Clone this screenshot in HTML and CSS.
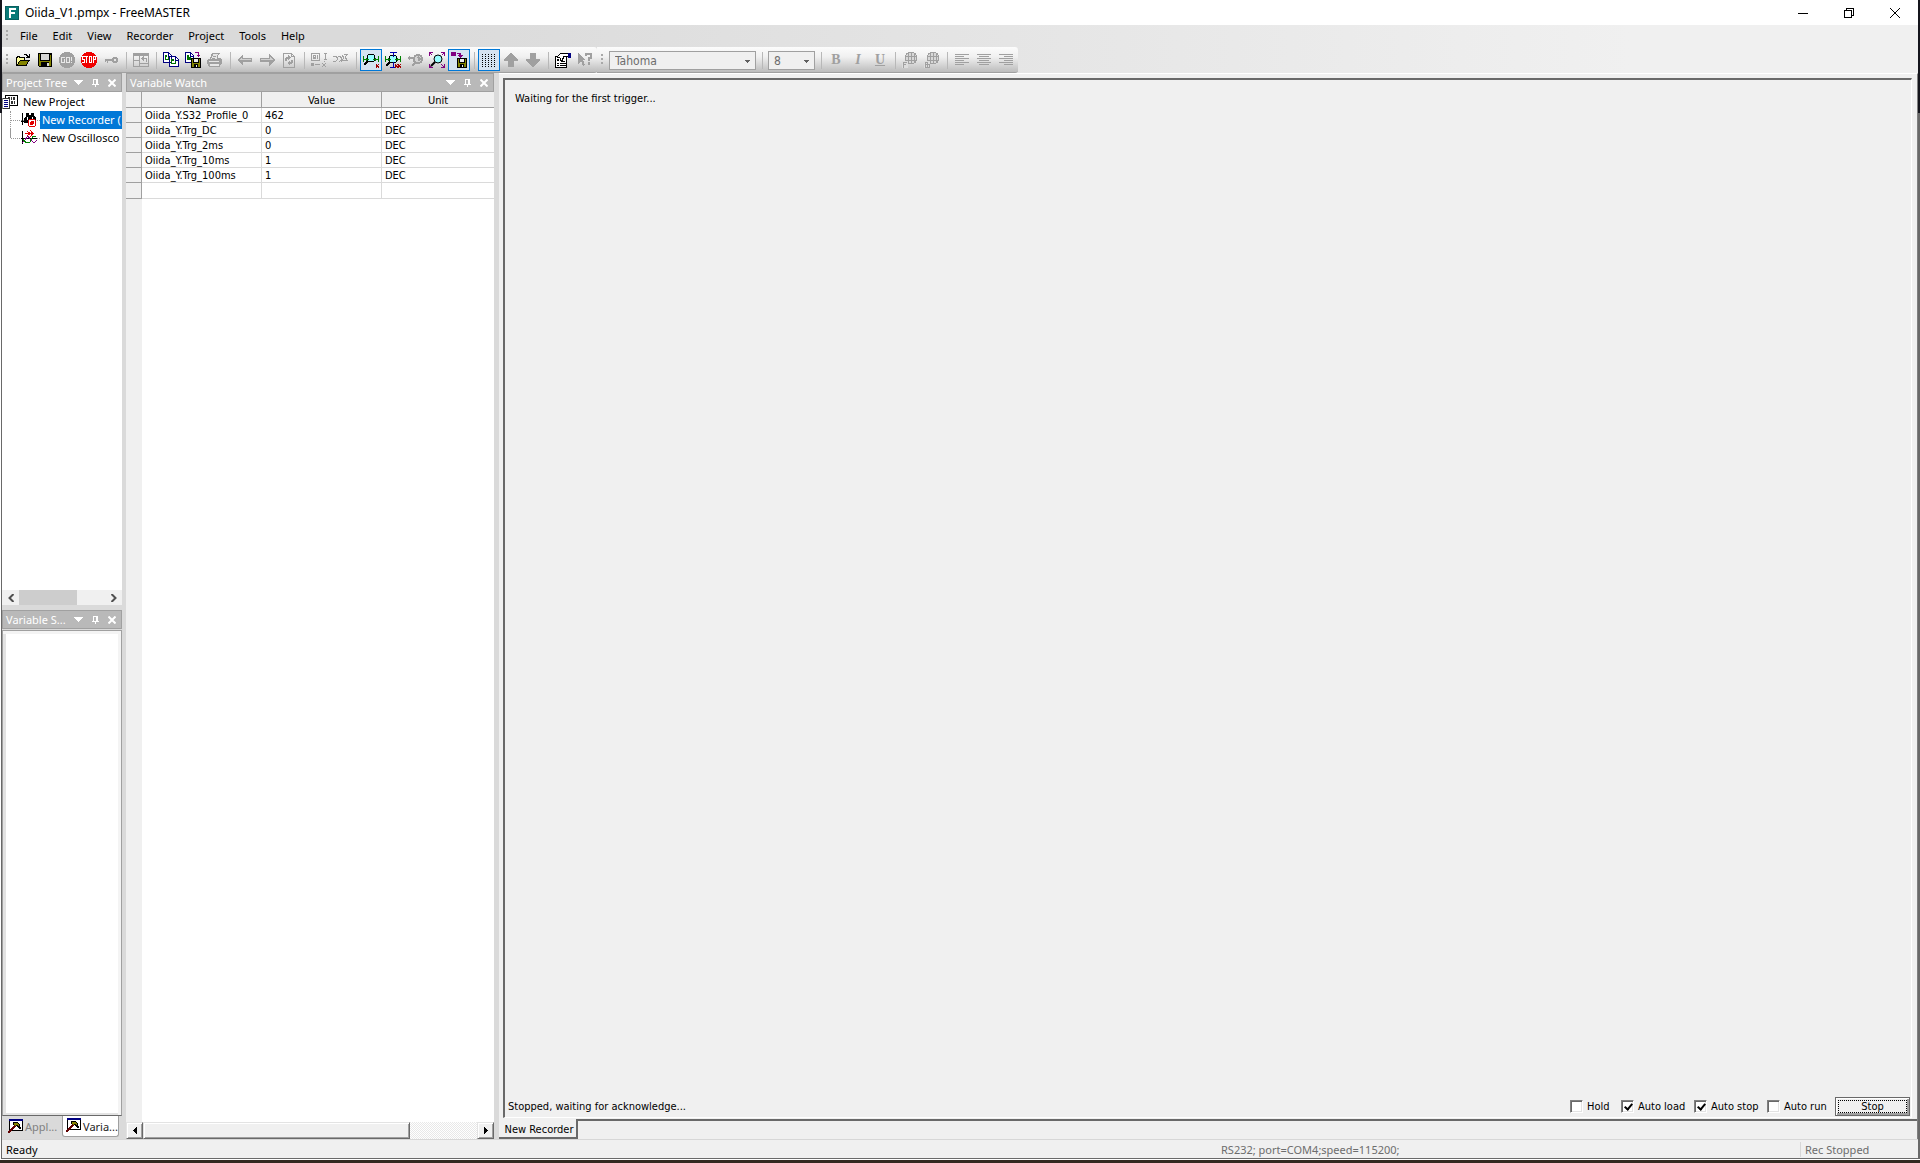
FILE: index.html
```html
<!DOCTYPE html>
<html lang="en">
<head>
  <meta charset="UTF-8" />
  <title>Oiida_V1.pmpx - FreeMASTER</title>
  <link rel="stylesheet" href="styles.css">
</head>
<body>
  <div class="desktop">
  <div class="window">
    <header class="titlebar">
      <svg class="logo" width="14" height="14" viewBox="0 0 14 14"><rect width="14" height="14" fill="#0a5f5f"/><rect x="1" y="1" width="12" height="12" fill="#0a7a78"/><path d="M4 2h7v2H6v2h4v2H6v4H4z" fill="#fff"/></svg>
      <h1>Oiida_V1.pmpx - FreeMASTER</h1>
      <div class="winbtns">
        <button aria-label="Minimize"><svg width="10" height="10"><path d="M0 5.500h10" stroke="#000"/></svg></button>
        <button aria-label="Restore"><svg width="10" height="10" fill="none" stroke="#000"><path d="M.5 2.500h7v7h-7zM2.500 2.500v-2h7v7h-2"/></svg></button>
        <button aria-label="Close"><svg class="smooth" width="10" height="10" stroke="#000"><path d="M0 0l10 10M10 0L0 10"/></svg></button>
      </div>
    </header>

    <nav class="menubar">
      <i class="grip"></i>
      <button>File</button>
      <button>Edit</button>
      <button>View</button>
      <button>Recorder</button>
      <button>Project</button>
      <button>Tools</button>
      <button>Help</button>
    </nav>

    <div class="toolrow">
      <div class="toolbar">
        <i class="grip"></i>
        <button aria-label="Open"><svg viewBox="0 0 16 16"><path d="M1 14V5h1V4h3v1h5v3h5v1h-1v1h-1v2h-1v2z" fill="#000"/><path d="M2 12V6h1V5h1v1h5v2H5v1H4v1H3v2z" fill="#ffff9c"/><path d="M3 13v-1h1v-2h1V9h8v1h-1v2h-1v1z" fill="#848400"/><path d="M9 2h3v1h1v1h1V2h1v4h-4V5h1V4h-1V3H9z" fill="#000"/></svg></button>
        <button aria-label="Save"><svg viewBox="0 0 16 16"><path d="M1 1h14v14H2l-1-1z" fill="#000"/><path d="M2 2h1v7h10V2h1v12H2z" fill="#848400"/><path d="M4 2h8v6H4zM10 11h2v3h-2z" fill="#d8d8d8"/><path d="M4 10h8v1H4zM4 11h6v3H4zM13 2h1v1h-1z" fill="#000"/></svg></button>
        <button aria-label="Go"><svg viewBox="0 0 16 16"><path d="M5 0h6v1h2v1h1v1h1v2h1v6h-1v2h-1v1h-1v1h-2v1H5v-1H3v-1H2v-1H1v-2H0V5h1V3h1V2h1V1h2z" fill="#a0a0a0"/><path d="M5.500 5.500h-3v5h3v-3h-1M7.500 5.500h3v5h-3zM12.500 5v4M12.500 10v1" stroke="#e8e8e8" fill="none"/></svg></button>
        <button aria-label="Stop communication"><svg viewBox="0 0 16 16"><path d="M5 0h6v1h2v1h1v1h1v2h1v6h-1v2h-1v1h-1v1h-2v1H5v-1H3v-1H2v-1H1v-2H0V5h1V3h1V2h1V1h2z" fill="#f00000"/><path d="M4 4.500H1.500v3h2v3H1M4 4.500h3M5.500 4v7M8.500 4.500h2v6h-2zM12.500 11V4.500h2v3h-2" stroke="#fff" fill="none"/></svg></button>
        <button aria-label="Connect"><svg viewBox="0 0 16 16"><path d="M10 5h4v1h1v4h-1v1h-4v-1H9V9H5v2H4V9H3v1H2V7h7V6h1zM11 7v2h2V7z" fill="#a0a0a0" fill-rule="evenodd"/></svg></button>
        <i class="sep"></i>
        <button aria-label="Wizard"><svg viewBox="0 0 16 16"><path d="M0 1h16v14H0zM1 4v4h5V4zM7 4v7h8V4zM1 9v5h5V9zM7 12v2h8v-2z" fill="#a0a0a0" fill-rule="evenodd"/><path d="M9 6.500h4v3M11 4.500L9 6.500l2 2" stroke="#a0a0a0" fill="none"/></svg></button>
        <i class="sep"></i>
        <button aria-label="Copy"><svg viewBox="0 0 16 16"><path d="M.5.5h5l3 3v7h-8zM6.500 4.500h6l3 3v7h-9z" fill="#fff" stroke="#000080"/><path d="M5.500 1v3H8M12.500 5v3H15" stroke="#000080" fill="none"/><path d="M2 3h2v2h2v3H2zM8 7h3v2h2v3H8z" fill="#007000"/><path d="M3 5h2v2H3zM9 9h3v2H9z" fill="#fff"/></svg></button>
        <button aria-label="Copy to file"><svg viewBox="0 0 16 16"><path d="M.5.5h5l3 3v7h-8z" fill="#fff" stroke="#000080"/><path d="M5.500 1v3H8" stroke="#000080" fill="none"/><path d="M2 3h2v2h2v3H2z" fill="#007000"/><path d="M10 0h4v3h2l-2.500 2L11 3h2V1h-3z" fill="#800080"/><path d="M6 6h10v10H6z" fill="#000"/><path d="M7 7h1v4h6V7h1v8H7z" fill="#848400"/><path d="M9 7h4v3H9z" fill="#eee"/><path d="M9 12h4v3H9z"/><path d="M11 13h1v2h-1z" fill="#eee"/></svg></button>
        <button aria-label="Print"><svg viewBox="0 0 16 16"><path d="M5 1h8v1h-1v1h-1v3h3v1h1v5h-1v1h-1v2H2v-1H1v-2H0V8h1V7h2V5h1V2h1z" fill="#a0a0a0"/><path d="M6 2h5v1h-1v4H4V6h1V4h1zM2 9h10v1H2zM3 12h9v2H3z" fill="#e6e6e6"/><path d="M6 4h3M5 6h3" stroke="#a0a0a0"/></svg></button>
        <i class="sep"></i>
        <button aria-label="Back"><svg viewBox="0 0 16 16"><path d="M0 8l6-6v4h9v4H6v4z" fill="#a0a0a0"/><path d="M2 8l3-3v2h9v1z" fill="#d0d0d0"/></svg></button>
        <button aria-label="Forward"><svg viewBox="0 0 16 16"><path d="M16 8l-6-6v4H1v4h9v4z" fill="#a0a0a0"/><path d="M14 8l-3-3v2H2v1z" fill="#d0d0d0"/></svg></button>
        <button aria-label="Reload"><svg viewBox="0 0 16 16"><path d="M2.500 1.500h8l3 3v11h-11zM10.500 1v3.500h3" fill="none" stroke="#a0a0a0"/><path d="M4 9V6h1V5h2V3l3 3-3 2V7H6v2zM12 8v3h-1v1H9v2l-3-3 3-2v1h1V8z" fill="#a0a0a0"/></svg></button>
        <i class="sep"></i>
        <button aria-label="Oscilloscope setup"><svg viewBox="0 0 16 16"><path d="M.5 1.500h8v7h-8zM6 12l3 .5M11 11l4 4M15 11l-4 4" fill="none" stroke="#a0a0a0"/><path d="M2 3h2v1H2zM2 4h1v1H2zM2 5h2v2H2zM4 3h1v4H4zM6 3h1v4H6zM0 11h3v3H0zM4 12h2v1H4zM13 1h3v1h-1v5h1v1h-3V7h1V2h-1zM13 9h1v1h-1z" fill="#a0a0a0"/></svg></button>
        <button aria-label="Next variable"><svg viewBox="0 0 16 16"><path d="M0 4h3l2 3-2 2H0M5 4h2l2 3-3 3M9 3l2 3-3 4M11 2h4l-3 3 2 3h-4" fill="none" stroke="#a0a0a0"/></svg></button>
        <i class="sep"></i>
        <button class="on" aria-label="Zoom X"><svg viewBox="0 0 16 16"><circle cx="8" cy="6" r="4" fill="#9ff" stroke="#000"/><path d="M5 9l-4 4" stroke="#000" stroke-width="2"/><path d="M.5 4v6M15.500 4v6M1 7.500h5M10 7.500h5M3.500 6v3M12.500 6v3" stroke="#008000" fill="none"/><path d="M13 12l3 4M16 12l-3 4" stroke="#a00000"/></svg></button>
        <button aria-label="Zoom X Y"><svg viewBox="0 0 16 16"><circle cx="8" cy="7" r="4" fill="#9ff" stroke="#000"/><path d="M5 10l-4 4" stroke="#000" stroke-width="2"/><path d="M.5 4v6M15.500 4v6M1 7.500h5M10 7.500h5M3.500 6v3M12.500 6v3" stroke="#008000" fill="none"/><path d="M5 .5h7M8.500 1v4M8.500 10v5M5 15.500h5" stroke="#0000b0"/><path d="M10 12l3 4M13 12l-3 4M13 12l3 4M16 12l-3 4" stroke="#a00000"/></svg></button>
        <button aria-label="Undo zoom"><svg viewBox="0 0 16 16"><path d="M3 3L0 6l3 3V7h3v3h2V5H3z" fill="#a0a0a0"/><circle cx="11" cy="7" r="4" fill="#d4d4d4" stroke="#a0a0a0" stroke-width="2"/><path d="M11 5l2 2-2 2M9 10l-4 4" fill="none" stroke="#a0a0a0" stroke-width="2"/></svg></button>
        <button aria-label="Zoom all"><svg class="smooth" viewBox="0 0 16 16"><path d="M.5 4V.5H4M12 .5h3.500V4M15.500 12v3.500H12M4 15.500H.5V12M0 0l3 3M16 0l-3 3M16 16l-4-4M0 16l3-3" stroke="#800080" fill="none"/><circle cx="9" cy="7" r="4" fill="#9ff" stroke="#000"/><path d="M6 10l-4 4" stroke="#000" stroke-width="2"/></svg></button>
        <button class="on" aria-label="Auto save"><svg viewBox="0 0 16 16"><path d="M0 0h5v4H0zM6 1h4v2h2l-3 3-3-3h2V2H6z" fill="#800080"/><path d="M6 6h10v10H6z" fill="#000"/><path d="M7 7h1v4h6V7h1v8H7z" fill="#848400"/><path d="M9 7h4v3H9z" fill="#eee"/><path d="M9 12h4v3H9z"/><path d="M11 13h1v2h-1z" fill="#eee"/></svg></button>
        <i class="sep"></i>
        <button class="on" aria-label="Show grid"><svg viewBox="0 0 16 16"><path d="M1.500 2v13M4.500 2v13M7.500 2v13M10.500 2v13M13.500 2v13" stroke="#000" stroke-dasharray="1 1"/></svg></button>
        <button aria-label="Up"><svg viewBox="0 0 16 16"><path d="M8 1l7 6v2h-4v6H5V9H1V7z" fill="#a0a0a0"/></svg></button>
        <button aria-label="Down"><svg viewBox="0 0 16 16"><path d="M8 15l7-6V7h-4V1H5v6H1v2z" fill="#a0a0a0"/></svg></button>
        <i class="sep"></i>
        <button aria-label="Properties"><svg viewBox="0 0 16 16"><path d="M.5 4.500h11v11H.5z" fill="#fff" stroke="#000"/><path d="M2 7h2v2H2zM2 11h2v1H2zM2 13h2v1H2zM6 9h4v1H6zM5 11h6v1H5zM5 13h6v1H5z" fill="#000"/><path d="M2 5l4-4h7v3H8v2H7v2H5V6z" fill="#fff" stroke="#000"/><path d="M13 1h3v5h-3z" fill="#000080"/></svg></button>
        <button aria-label="Help pointer"><svg viewBox="0 0 16 16"><path d="M1 1l8 7H6l2 5-2 1-2-5-3 3z" fill="#a0a0a0"/><path d="M9 4V2h5v4h-2v3M12 10v3" stroke="#a0a0a0" stroke-width="2" fill="none"/></svg></button>
      </div>
      <div class="toolbar">
        <i class="grip"></i>
        <select class="font" aria-label="Font" disabled><option>Tahoma</option></select>
        <i class="sep"></i>
        <select class="size" aria-label="Font size" disabled><option>8</option></select>
        <i class="sep"></i>
        <button class="letter" aria-label="Bold"><b>B</b></button>
        <button class="letter" aria-label="Italic"><b><em>I</em></b></button>
        <button class="letter" aria-label="Underline"><b><u>U</u></b></button>
        <i class="sep"></i>
        <button aria-label="Text color"><svg viewBox="0 0 16 16"><circle cx="9" cy="6" r="6" fill="#d8d8d8" stroke="#a0a0a0"/><path d="M9 0v12M3 4h12M3 8h12M6 1v10M12 1v10" stroke="#a0a0a0"/><path d="M0 9h6v7H0z" fill="#ddd"/><path d="M1.500 16V10.500H5M1 12.500h3" stroke="#a0a0a0" fill="none"/></svg></button>
        <button aria-label="Back color"><svg viewBox="0 0 16 16"><circle cx="9" cy="6" r="6" fill="#d8d8d8" stroke="#a0a0a0"/><path d="M9 0v12M3 4h12M3 8h12M6 1v10M12 1v10" stroke="#a0a0a0"/><path d="M0 9h6v7H0z" fill="#ddd"/><path d="M1.500 10.500h2v5h-2zM1 12.500h4v3H1" stroke="#a0a0a0" fill="none"/></svg></button>
        <i class="sep"></i>
        <button aria-label="Align left"><svg viewBox="0 0 16 16"><path d="M1 2.500h14M1 4.500h9M1 6.500h14M1 8.500h9M1 10.500h14M1 12.500h9" stroke="#a0a0a0"/></svg></button>
        <button aria-label="Center"><svg viewBox="0 0 16 16"><path d="M1 2.500h14M3 4.500h10M1 6.500h14M3 8.500h10M1 10.500h14M3 12.500h10" stroke="#a0a0a0"/></svg></button>
        <button aria-label="Align right"><svg viewBox="0 0 16 16"><path d="M1 2.500h14M6 4.500h9M1 6.500h14M6 8.500h9M1 10.500h14M6 12.500h9" stroke="#a0a0a0"/></svg></button>
      </div>
    </div>

    <div class="workspace">
      <aside class="left">
        <div class="dockhead"><h2>Project Tree</h2>
          <button aria-label="Menu"><svg width="9" height="5"><path d="M0 0h9L4.500 5z" fill="#fff"/></svg></button>
          <button aria-label="Pin"><svg width="7" height="8"><path d="M1.500 5V.5h4V5M4.500 0v5M0 5.500h7M3.500 5v3" stroke="#fff" fill="none"/></svg></button>
          <button aria-label="Close"><svg class="smooth" width="8" height="8"><path d="M.5.5l7 7M7.500.5l-7 7" stroke="#fff" stroke-width="2"/></svg></button>
        </div>
        <ul class="tree">
          <li class="root"><svg width="16" height="16" viewBox="0 0 16 16"><path d="M3.500 1.500h12v10h-12z" fill="#fff" stroke="#000"/><path d="M6 3h2v3H6zM9 3h1v3H9zM11 3h2v3h-2zM9 7h2v3H9zM12 7h1v3h-1z" fill="#333"/><path d="M.5 4.500h7v10h-7z" fill="#fff" stroke="#333"/><path d="M2 6.500h4M2 8.500h4M2 10.500h4M2 12.500h4" stroke="#000080"/><path d="M0 4h1v11H0z" fill="#808080"/></svg><span>New Project</span></li>
          <li class="child sel"><svg width="16" height="16" viewBox="0 0 16 16"><path d="M1.500 1v12M0 9.500h6" stroke="#000"/><path d="M5 4V1h3v2h2V1h3v3l2 2v6H8V9H7v2H3V7z" fill="#000"/><path d="M6.500 5v3M11.500 5v2" stroke="#fff"/><circle cx="11" cy="11" r="4" fill="#fff" stroke="#e00000"/><circle cx="11" cy="11" r="2" fill="#e00000"/></svg><span>New Recorder (</span></li>
          <li class="child last"><svg width="16" height="16" viewBox="0 0 16 16"><path d="M1.500 1v13M0 8.500h16" stroke="#000"/><path d="M1 13l3-3 3-4 3 4 3 3 3-3" stroke="#800080" fill="none"/><path d="M2 9l3 4 4-1 3-6 3 1" stroke="#008000" fill="none"/><path d="M4 3.500h8M9 0l3 3.500L9 7M6 1l3 2.500L6 6" stroke="#e00000" fill="none"/></svg><span>New Oscillosco</span></li>
        </ul>
        <div class="hscroll">
          <button aria-label="Scroll left"><svg class="smooth" width="6" height="8"><path d="M5.500 0L1.500 4l4 4" stroke="#505050" stroke-width="2" fill="none"/></svg></button>
          <div class="track"><div class="thumb"></div></div>
          <button aria-label="Scroll right"><svg class="smooth" width="6" height="8"><path d="M.5 0l4 4-4 4" stroke="#505050" stroke-width="2" fill="none"/></svg></button>
        </div>
        <div class="dockhead second"><h2>Variable S...</h2>
          <button aria-label="Menu"><svg width="9" height="5"><path d="M0 0h9L4.500 5z" fill="#fff"/></svg></button>
          <button aria-label="Pin"><svg width="7" height="8"><path d="M1.500 5V.5h4V5M4.500 0v5M0 5.500h7M3.500 5v3" stroke="#fff" fill="none"/></svg></button>
          <button aria-label="Close"><svg class="smooth" width="8" height="8"><path d="M.5.5l7 7M7.500.5l-7 7" stroke="#fff" stroke-width="2"/></svg></button>
        </div>
        <div class="stimulus"></div>
        <div class="docktabs">
          <button><svg width="16" height="16" viewBox="0 0 16 16"><path d="M1.500.5h13v11h-13z" fill="#fff" stroke="#000"/><path d="M1 0h14v2H1z" fill="#000080"/><path d="M5 3h4l3 3 1 4h-2L9 7 7 8 5 6z" fill="#000"/><path d="M6 4h3l2 2 1 3-3-3-2 1z" fill="#848400"/><path d="M7 7l-7 7" stroke="#600000" stroke-width="2"/></svg>Appl...</button>
          <button class="active"><svg width="16" height="16" viewBox="0 0 16 16"><path d="M1.500.5h13v11h-13z" fill="#fff" stroke="#000"/><path d="M1 0h14v2H1z" fill="#000080"/><path d="M5 3h4l3 3 1 4h-2L9 7 7 8 5 6z" fill="#000"/><path d="M6 4h3l2 2 1 3-3-3-2 1z" fill="#848400"/><path d="M7 7l-7 7" stroke="#600000" stroke-width="2"/></svg>Varia...</button>
        </div>
      </aside>

      <section class="watch">
        <div class="dockhead"><h2>Variable Watch</h2>
          <button aria-label="Menu"><svg width="9" height="5"><path d="M0 0h9L4.500 5z" fill="#fff"/></svg></button>
          <button aria-label="Pin"><svg width="7" height="8"><path d="M1.500 5V.5h4V5M4.500 0v5M0 5.500h7M3.500 5v3" stroke="#fff" fill="none"/></svg></button>
          <button aria-label="Close"><svg class="smooth" width="8" height="8"><path d="M.5.5l7 7M7.500.5l-7 7" stroke="#fff" stroke-width="2"/></svg></button>
        </div>
        <div class="grid">
          <table>
            <colgroup><col class="c-head"><col class="c-name"><col class="c-name"><col></colgroup>
            <thead><tr><th></th><th>Name</th><th>Value</th><th>Unit</th></tr></thead>
            <tbody>
              <tr><th></th><td>Oiida_Y.S32_Profile_0</td><td>462</td><td>DEC</td></tr>
              <tr><th></th><td>Oiida_Y.Trg_DC</td><td>0</td><td>DEC</td></tr>
              <tr><th></th><td>Oiida_Y.Trg_2ms</td><td>0</td><td>DEC</td></tr>
              <tr><th></th><td>Oiida_Y.Trg_10ms</td><td>1</td><td>DEC</td></tr>
              <tr><th></th><td>Oiida_Y.Trg_100ms</td><td>1</td><td>DEC</td></tr>
              <tr class="blank"><th></th><td></td><td></td><td></td></tr>
            </tbody>
          </table>
        </div>
        <div class="classic-scroll">
          <button aria-label="Scroll left"><svg width="4" height="7"><path d="M4 0v7L0 3.500z"/></svg></button>
          <div class="thumb"></div>
          <div class="track"></div>
          <button aria-label="Scroll right"><svg width="4" height="7"><path d="M0 0v7l4-3.500z"/></svg></button>
        </div>
      </section>

      <main class="detail">
        <div class="view">
          <p class="message">Waiting for the first trigger...</p>
          <div class="controls">
            <p>Stopped, waiting for acknowledge...</p>
            <label class="hold"><input type="checkbox">Hold</label>
            <label class="auto"><input type="checkbox" checked>Auto load</label>
            <label class="auto"><input type="checkbox" checked>Auto stop</label>
            <label class="run"><input type="checkbox">Auto run</label>
            <button class="push"><span>Stop</span></button>
          </div>
        </div>
        <div class="pagetabs"><button>New Recorder</button><i></i></div>
      </main>
    </div>

    <footer class="status">
      <span class="ready">Ready</span>
      <span class="port">RS232; port=COM4;speed=115200;</span>
      <span class="rec">Rec Stopped</span>
    </footer>
  </div>
  </div>
</body>
</html>
```
FILE: styles.css
```css
* {
  box-sizing: border-box;
}
body {
  margin: 0;
  font-family: "Noto Sans", "Open Sans", sans-serif;
  font-size: 11px;
  color: #000;
}
button {
  border: 0;
  padding: 0;
  background: none;
  font: inherit;
  color: inherit;
}
h1, h2, p, ul {
  margin: 0;
  padding: 0;
  font-weight: normal;
}
svg {
  display: block;
  flex: none;
  shape-rendering: crispEdges;
}
svg.smooth {
  shape-rendering: auto;
}

/* strips of desktop left visible around the window */
.desktop {
  height: 100vh;
  padding: 0 2px 4px;
  background:
    linear-gradient(#15151c, #15151c) 0 0 / 100% 113px no-repeat,
    linear-gradient(#33271f, #33271f) 0 100% / 100% 3px no-repeat,
    linear-gradient(#fff, #fff) 0 0 / 1px 100% no-repeat,
    linear-gradient(#fff, #fff) 0 calc(100% - 3px) / 100% 1px no-repeat,
    #696969;
}
.window {
  height: 100%;
  display: flex;
  flex-direction: column;
  background: #f0f0f0;
}

.titlebar {
  display: flex;
  align-items: center;
  height: 25px;
  padding-left: 3px;
  background: #fff;
}
.titlebar h1 {
  flex: 1;
  margin-left: 6px;
  font-size: 12px;
}
.winbtns {
  display: flex;
}
.winbtns button {
  width: 46px;
  height: 22px;
  display: flex;
  align-items: center;
  justify-content: center;
}

.menubar {
  display: flex;
  align-items: center;
  height: 22px;
  padding: 0 4px 1px;
  background: linear-gradient(90deg, #dadada, #dadada 20%, #f0f0f0 85%);
}
.menubar button {
  padding: 0 7px 0 8px;
}
.grip {
  width: 2px;
  height: 12px;
  margin: 0 4px 0 0;
  background: repeating-linear-gradient(#a8a8a8 0 2px, transparent 2px 4px);
}

.toolrow {
  display: flex;
  height: 26px;
  background: linear-gradient(90deg, #dadada, #dadada 20%, #f0f0f0 85%);
}
.toolbar {
  display: flex;
  align-items: center;
  height: 26px;
  padding: 1px 1px 0 4px;
  border-bottom: 1px solid #a0a0a0;
  border-radius: 0 3px 3px 0;
  background: linear-gradient(#fcfcfc, #f0f0f0 40%, #bcbcbc);
}
.toolbar button {
  width: 22px;
  height: 22px;
  display: flex;
  align-items: center;
  justify-content: center;
}
.toolbar svg {
  width: 16px;
  height: 16px;
}
.toolbar button.on {
  border: 1px solid #0078d7;
  background: #d5e3f0;
}
.sep {
  width: 1px;
  height: 17px;
  margin: 0 3px 0 4px;
  background: #b8b8b8;
}
.toolbar .letter {
  font-family: "Liberation Serif", serif;
  font-size: 14px;
  color: #a0a0a0;
}
.toolbar select {
  appearance: none;
  height: 19px;
  margin: 1px 2px 0;
  padding: 0 5px;
  border: 1px solid #a0a0a0;
  border-radius: 0;
  font: 12px/18px "DejaVu Sans Condensed", sans-serif;
  color: #6d6d6d;
  opacity: 1;
  background: linear-gradient(#606060, #606060) right 5px top 8px / 5px 1px no-repeat,
    linear-gradient(#606060, #606060) right 6px top 9px / 3px 1px no-repeat,
    linear-gradient(#606060, #606060) right 7px top 10px / 1px 1px no-repeat, #f0f0f0;
}
.toolbar .font {
  width: 147px;
}
.toolbar .size {
  width: 47px;
}

.workspace {
  flex: 1;
  min-height: 0;
  display: flex;
  background: #dadada;
}
.dockhead {
  display: flex;
  align-items: center;
  gap: 9px;
  height: 19px;
  padding: 0 5px 0 3px;
  border: 1px solid #a0a0a0;
  background: #b9b9b9;
  color: #fff;
}
.dockhead h2 {
  flex: 1;
  min-width: 0;
  font-size: 11px;
  white-space: nowrap;
}

.left {
  width: 120px;
  margin-right: 4px;
  display: flex;
  flex-direction: column;
}
.tree {
  height: 498px;
  padding-top: 1px;
  background: #fff;
  overflow: hidden;
  list-style: none;
}
.tree li {
  display: flex;
  align-items: center;
  height: 18px;
  white-space: nowrap;
}
.tree span {
  padding: 0 0 0 2px;
  margin-left: 3px;
  line-height: 18px;
}
.tree .child {
  margin-left: 8px;
  background: linear-gradient(90deg, #999 50%, transparent 50%) 0 9px / 2px 1px repeat-x;
  border-left: 1px dotted #999;
}
.tree .last {
  border-image: linear-gradient(#999 50%, transparent 50%) 1;
}
.tree .child svg {
  margin-left: 10px;
}
.tree .child span {
  flex: 1;
  background: #fff;
}
.tree .child.sel span {
  background: #0078d7;
  color: #fff;
}
.hscroll {
  display: flex;
  height: 15px;
  background: #f0f0f0;
}
.hscroll button {
  width: 17px;
  display: flex;
  align-items: center;
  justify-content: center;
}
.hscroll .track {
  flex: 1;
}
.hscroll .thumb {
  width: 67%;
  height: 100%;
  background: #cdcdcd;
}
.second {
  margin-top: 5px;
}
.stimulus {
  flex: 1;
  margin-top: 1px;
  border: 1px solid #a0a0a0;
  border-bottom-color: #696969;
  background: #fff;
  box-shadow: inset -3px 3px #f4f4f4, inset 3px -2px #e3e3e3;
}
.docktabs {
  display: flex;
  height: 23px;
}
.docktabs button {
  display: flex;
  align-items: center;
  gap: 1px;
  width: 60px;
  height: 21px;
  padding: 0 0 0 6px;
  color: #808080;
}
.docktabs .active {
  width: 57px;
  padding-left: 3px;
  background: #fff;
  border: solid #a0a0a0;
  border-width: 0 1px 1px;
  border-radius: 0 0 3px 3px;
  color: #222;
}

.watch {
  width: 368px;
  display: flex;
  flex-direction: column;
}
.grid {
  flex: 1;
  background: linear-gradient(90deg, #f0f0f0 16px, #fff 16px);
}
.grid table {
  width: 100%;
  table-layout: fixed;
  border-collapse: separate;
  border-spacing: 0;
  font-family: "DejaVu Sans Condensed", sans-serif;
}
.c-head {
  width: 16px;
}
.c-name {
  width: 120px;
}
.grid th, .grid td {
  height: 15px;
  padding: 0 3px;
  line-height: 13px;
  text-align: left;
  font-weight: normal;
  border: solid #dadada;
  border-width: 0 1px 1px 0;
}
.grid th {
  border-color: #a0a0a0;
  background: #f0f0f0;
  text-align: center;
}
.grid thead th {
  padding-top: 2px;
}
.grid .blank td {
  height: 16px;
}
.grid tr > :last-child {
  border-right: 0;
}
.classic-scroll {
  display: flex;
  height: 17px;
}
.classic-scroll button, .classic-scroll .thumb {
  border: 1px solid;
  border-color: #e3e3e3 #696969 #696969 #e3e3e3;
  box-shadow: inset 1px 1px #fff, inset -1px -1px #a0a0a0;
  background: #f0f0f0;
}
.classic-scroll button {
  width: 17px;
  display: flex;
  align-items: center;
  justify-content: center;
}
.classic-scroll .thumb {
  flex: 267;
}
.classic-scroll .track {
  flex: 67;
  background: repeating-conic-gradient(#fff 0 25%, #e8e8e8 0 50%) 0 0 / 2px 2px;
}

.detail {
  flex: 1;
  margin-left: 5px;
  display: flex;
  flex-direction: column;
  border-top: 1px solid #fff;
  border-right: 1px solid #808080;
  background: #f0f0f0;
  font-family: "DejaVu Sans Condensed", sans-serif;
}
.view {
  flex: 1;
  margin: 4px 5px 1px 4px;
  display: flex;
  flex-direction: column;
  justify-content: space-between;
  border: solid #696969;
  border-width: 2px 1px 1px 2px;
  border-right-color: #fff;
  border-bottom-color: #fff;
}
.message {
  padding: 12px 10px;
}
.controls {
  display: flex;
  align-items: center;
  height: 22px;
  padding: 0 1px 0 3px;
}
.controls p {
  flex: 1;
}
.controls label {
  display: flex;
  align-items: center;
  gap: 4px;
}
.hold {
  width: 51px;
}
.auto {
  width: 73px;
}
.run {
  width: 68px;
}
.controls input {
  appearance: none;
  width: 13px;
  height: 13px;
  margin: 0;
  border: 1px solid;
  border-color: #808080 #fff #fff #808080;
  box-shadow: inset 1px 1px #696969, inset -1px -1px #e3e3e3;
  background: #fff;
}
.controls input:checked::after {
  content: "";
  display: block;
  width: 3px;
  height: 6px;
  margin: 1px 0 0 4px;
  border: solid #000;
  border-width: 0 2px 2px 0;
  transform: rotate(40deg);
}
.push {
  width: 75px;
  height: 19px;
  padding: 2px;
  border: 1px solid #696969;
  box-shadow: inset 1px 1px #fff, inset -2px -2px #a0a0a0;
}
.push span {
  display: block;
  line-height: 11px;
  border: 1px dotted #000;
}
.pagetabs {
  display: flex;
  height: 20px;
}
.pagetabs button {
  width: 79px;
  padding: 3px 0 0 3px;
  border: solid #696969;
  border-width: 0 2px 2px 0;
}
.pagetabs i {
  flex: 1;
  border-top: 2px solid #696969;
}

.status {
  display: flex;
  align-items: center;
  height: 20px;
  padding-left: 4px;
  border-top: 1px solid #d7d7d7;
  border-bottom: 1px solid #696969;
}
.status .ready {
  flex: 1;
}
.status .port {
  width: 579px;
  color: #6d6d6d;
}
.status .rec {
  width: 118px;
  padding-left: 4px;
  border-left: 1px solid #d7d7d7;
  color: #6d6d6d;
}
```
